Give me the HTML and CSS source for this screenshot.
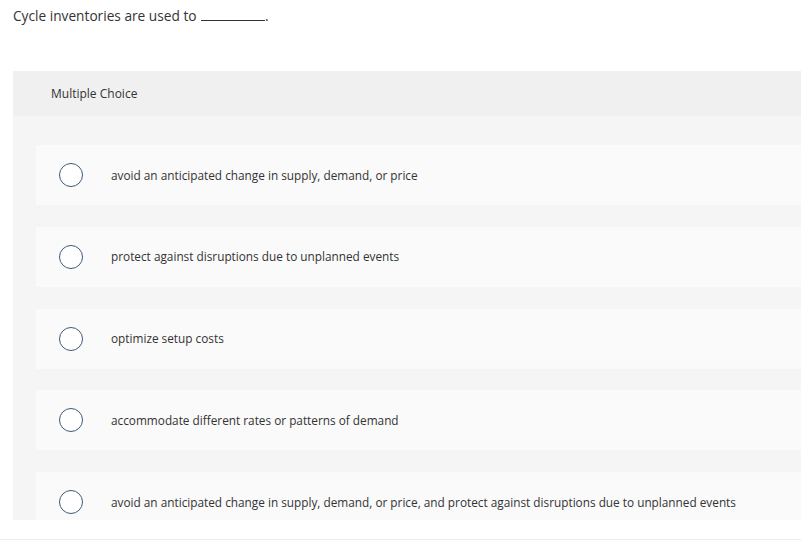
FILE: index.html
```html
<!DOCTYPE html>
<html>
<head>
<meta charset="utf-8">
<link rel="stylesheet" href="styles.css">
</head>
<body>
<p class="question">Cycle inventories are used to <span class="blank"></span>.</p>
<section class="panel">
  <header class="panel-head">Multiple Choice</header>
  <div class="panel-body">
    <div class="choice"><span class="radio"></span><span class="label">avoid an anticipated change in supply, demand, or price</span></div>
    <div class="choice"><span class="radio"></span><span class="label">protect against disruptions due to unplanned events</span></div>
    <div class="choice"><span class="radio"></span><span class="label">optimize setup costs</span></div>
    <div class="choice"><span class="radio"></span><span class="label">accommodate different rates or patterns of demand</span></div>
    <div class="choice"><span class="radio"></span><span class="label">avoid an anticipated change in supply, demand, or price, and protect against disruptions due to unplanned events</span></div>
  </div>
</section>
<div class="rule"></div>
</body>
</html>
```
FILE: styles.css
```css
html, body {
  margin: 0;
  padding: 0;
  background: #fff;
}
body {
  font-family: "Open Sans", Arial, sans-serif;
  color: #333;
}
.question {
  margin: 0;
  padding: 6px 0 0 13px;
  height: 65px;
  font-size: 13.7px;
  line-height: 20px;
  color: #333;
}
.blank {
  display: inline-block;
  width: 64px;
  border-bottom: 1px solid #333;
  vertical-align: baseline;
  margin-left: 1px;
}
.panel {
  margin-left: 13px;
  height: 449px;
  overflow: hidden;
  background: #f5f5f5;
}
.panel-head {
  height: 44px;
  padding-bottom: 1px;
  display: flex;
  align-items: center;
  padding-left: 38px;
  background: #f0f0f0;
  font-size: 12px;
  color: #333;
}
.panel-body {
  padding: 29px 0 0 23px;
}
.choice {
  height: 60px;
  margin-bottom: 21.75px;
  background: #fafafa;
  display: flex;
  align-items: center;
  padding-left: 23px;
}
.radio {
  width: 22px;
  height: 22px;
  border: 1.5px solid #3d5a78;
  border-radius: 50%;
  background: #fff;
  flex: none;
}
.label {
  margin-left: 28px;
  font-size: 11.8px;
  color: #333;
  padding-bottom: 1px;
}
.rule {
  margin-top: 19px;
  border-top: 1px solid #ececec;
}
```
